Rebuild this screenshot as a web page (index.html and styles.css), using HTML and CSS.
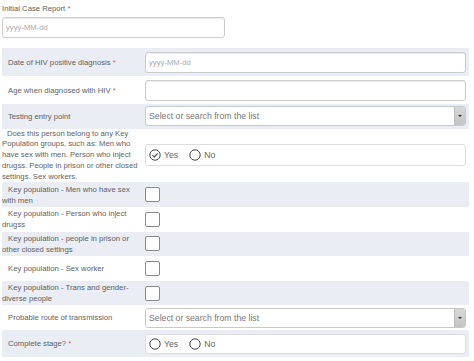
FILE: index.html
```html
<!DOCTYPE html>
<html lang="en">
<head>
  <meta charset="UTF-8">
  <title>Initial Case Report</title>
  <link rel="stylesheet" href="styles.css">
</head>
<body>
  <div class="form">
    <div class="top">
      <div class="top-label">Initial Case Report <span class="req">*</span></div>
      <input class="input top-input" type="text" placeholder="yyyy-MM-dd">
    </div>

    <div class="row row-shade row-28">
      <div class="label">Date of HIV positive diagnosis <span class="req">*</span></div>
      <div class="field"><input class="input" type="text" placeholder="yyyy-MM-dd"></div>
    </div>
    <div class="row row-28">
      <div class="label">Age when diagnosed with HIV <span class="req">*</span></div>
      <div class="field"><input class="input" type="text"></div>
    </div>
    <div class="row row-shade">
      <div class="label">Testing entry point</div>
      <div class="field">
        <div class="select"><span>Select or search from the list</span><span class="select-btn"><i class="caret"></i></span></div>
      </div>
    </div>
    <div class="row row-q">
      <div class="label">Does this person belong to any Key Population groups, such as: Men who have sex with men. Person who inject drugss. People in prison or other closed settings. Sex workers.</div>
      <div class="field">
        <div class="radios">
          <label class="radio">
            <svg width="12" height="12" viewBox="0 0 12 12"><circle cx="6" cy="6" r="5.2" fill="none" stroke="#444" stroke-width="1"/><path d="M3.4 6.1 L5.3 7.9 L8.7 4.3" fill="none" stroke="#444" stroke-width="1.1"/></svg>
            Yes
          </label>
          <label class="radio">
            <svg width="12" height="12" viewBox="0 0 12 12"><circle cx="6" cy="6" r="5.2" fill="none" stroke="#444" stroke-width="1"/></svg>
            No
          </label>
        </div>
      </div>
    </div>
    <div class="row row-shade row-kp">
      <div class="label">Key population - Men who have sex with men</div>
      <div class="field"><span class="check"></span></div>
    </div>
    <div class="row row-kp">
      <div class="label">Key population - Person who inject drugss</div>
      <div class="field"><span class="check"></span></div>
    </div>
    <div class="row row-shade row-kp">
      <div class="label">Key population - people in prison or other closed settings</div>
      <div class="field"><span class="check"></span></div>
    </div>
    <div class="row row-kp">
      <div class="label">Key population - Sex worker</div>
      <div class="field"><span class="check"></span></div>
    </div>
    <div class="row row-shade row-kp">
      <div class="label">Key population - Trans and gender-diverse people</div>
      <div class="field"><span class="check"></span></div>
    </div>
    <div class="row row-kp">
      <div class="label">Probable route of transmission</div>
      <div class="field">
        <div class="select"><span>Select or search from the list</span><span class="select-btn"><i class="caret"></i></span></div>
      </div>
    </div>
    <div class="row row-shade row-last">
      <div class="label">Complete stage? <span class="req">*</span></div>
      <div class="field">
        <div class="radios radios-small">
          <label class="radio">
            <svg width="12" height="12" viewBox="0 0 12 12"><circle cx="6" cy="6" r="5.2" fill="none" stroke="#444" stroke-width="1"/></svg>
            Yes
          </label>
          <label class="radio">
            <svg width="12" height="12" viewBox="0 0 12 12"><circle cx="6" cy="6" r="5.2" fill="none" stroke="#444" stroke-width="1"/></svg>
            No
          </label>
        </div>
      </div>
    </div>
  </div>
</body>
</html>
```

FILE: styles.css
```css
body {
  margin: 0;
  background: #fff;
  font-family: "Liberation Sans", Arial, sans-serif;
  color: #616161;
}
.form {
  width: 467px;
  margin-left: 2px;
}
.req {
  color: #e05a5a;
}
.top {
  padding-top: 3px;
  margin-bottom: 10px;
}
.top-label {
  font-size: 7.7px;
  line-height: 11px;
}
.input {
  display: block;
  box-sizing: border-box;
  width: 100%;
  height: 21px;
  margin: 0;
  padding: 0 3px;
  border: 1px solid #ccc;
  border-radius: 3px;
  box-shadow: inset 0 1px 1px rgba(0, 0, 0, 0.08);
  background: #fff;
  font-family: "Liberation Sans", Arial, sans-serif;
  font-size: 7.7px;
  color: #555;
  outline: none;
}
.input::placeholder {
  color: #aaa;
}
.top-input {
  width: 223px;
  margin-top: 3px;
}
.row {
  display: flex;
  align-items: center;
  min-height: 24.5px;
}
.row-shade {
  background: #eaedf4;
}
.row-28 {
  min-height: 28px;
}
.row-kp {
  min-height: 24.6px;
}
.row-last {
  min-height: 27px;
}
.label {
  box-sizing: border-box;
  width: 143px;
  flex: none;
  padding: 0 3px 0 0;
  text-indent: 6px;
  font-size: 7.7px;
  line-height: 11px;
}
.row-q .label {
  text-indent: 5px;
  line-height: 10.8px;
}
.field {
  flex: 1;
  padding-right: 3px;
}
.select {
  display: flex;
  align-items: center;
  justify-content: space-between;
  box-sizing: border-box;
  height: 20px;
  border: 1px solid #c8c8c8;
  border-radius: 3px;
  background: #fff;
  font-size: 8.7px;
  color: #777;
  padding-left: 3px;
  overflow: hidden;
}
.select-btn {
  display: flex;
  align-items: center;
  justify-content: center;
  width: 10px;
  height: 100%;
  background: linear-gradient(#d8d8d8, #c4c4c4);
  border-left: 1px solid #bbb;
}
.caret {
  width: 0;
  height: 0;
  border-left: 2px solid transparent;
  border-right: 2px solid transparent;
  border-top: 2px solid #333;
}
.radios {
  display: flex;
  align-items: center;
  gap: 11px;
  box-sizing: border-box;
  height: 22px;
  border: 1px solid #ddd;
  border-radius: 3px;
  background: #fff;
  padding-left: 3px;
  font-size: 8.7px;
  color: #666;
}
.radios-small {
  height: 20px;
}
.radio {
  display: flex;
  align-items: center;
  gap: 3px;
}
.check {
  display: block;
  box-sizing: border-box;
  width: 15px;
  height: 15px;
  border: 1px solid #888;
  border-radius: 2px;
  background: #fff;
}
```
